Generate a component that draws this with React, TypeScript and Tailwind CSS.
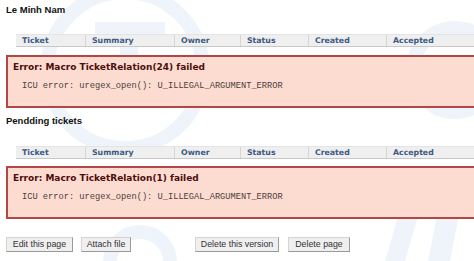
import React from "react";

const cols = [
  { label: "Ticket", w: "w-[69px]" },
  { label: "Summary", w: "w-[89px]" },
  { label: "Owner", w: "w-[66px]" },
  { label: "Status", w: "w-[68px]" },
  { label: "Created", w: "w-[78px]" },
  { label: "Accepted", w: "w-[100px]" },
];

function Header() {
  return (
    <div className="ml-[10px] flex h-[13px] border-t border-t-[#e4e4e4] border-b border-b-[#c8c8c8] bg-[#efefef]">
      {cols.map((c, i) => (
        <div
          key={c.label}
          className={`${c.w} shrink-0 pl-[6px] text-[7.8px] leading-[12px] font-bold text-[#3b5a82] ${i > 0 ? "border-l border-l-[#d6d6d6]" : ""}`}
          style={{ fontFamily: '"DejaVu Sans", Verdana, sans-serif' }}
        >
          {c.label}
        </div>
      ))}
    </div>
  );
}

function ErrorBox({ n }: { n: string }) {
  return (
    <div className="w-[480px] h-[53px] border-2 border-[#b44646] bg-[#fcdcd0] pl-[5px]">
      <div
        className="pt-[4px] text-[9px] leading-[12px] font-bold text-[#4e0c0c]"
        style={{ fontFamily: '"DejaVu Sans", Verdana, sans-serif' }}
      >
        Error: Macro TicketRelation({n}) failed
      </div>
      <div
        className="mt-[8px] pl-[9px] text-[8.7px] leading-[10px] text-[#4c3c3c]"
        style={{ fontFamily: '"Liberation Mono", "Courier New", monospace' }}
      >
        ICU error: uregex_open(): U_ILLEGAL_ARGUMENT_ERROR
      </div>
    </div>
  );
}

function Btn({ children, w }: { children: React.ReactNode; w: string }) {
  return (
    <div
      className={`${w} h-[15px] flex items-center justify-center border border-[#d4d4d4] border-r-[#9a9a9a] border-b-[#9a9a9a] bg-[#efefef] text-[8.8px] text-[#333]`}
      style={{ fontFamily: '"Liberation Sans", Arial, sans-serif' }}
    >
      {children}
    </div>
  );
}

export default function App() {
  return (
    <div className="relative w-[474px] h-[261px] overflow-hidden bg-white">
      <svg className="absolute inset-0" width="474" height="261" viewBox="0 0 474 261">
        <g fill="none" stroke="#eff4fa" strokeWidth="14">
          <circle cx="125" cy="70" r="78" />
          <circle cx="455" cy="70" r="42" />
          <circle cx="140" cy="262" r="30" />
        </g>
        <g fill="#eff4fa">
          <rect x="95" y="22" width="70" height="12" />
          <rect x="120" y="22" width="18" height="55" />
          <polygon points="400,210 420,210 405,261 385,261" />
          <polygon points="440,200 462,200 450,261 428,261" />
        </g>
      </svg>
      <div className="relative pl-[6px] pt-[4px]">
        <div
          className="h-[12px] text-[9.5px] leading-[12px] font-bold text-[#111]"
          style={{ fontFamily: '"Liberation Sans", Arial, sans-serif' }}
        >
          Le Minh Nam
        </div>
        <div className="mt-[18px]">
          <Header />
        </div>
        <div className="mt-[8px]">
          <ErrorBox n="24" />
        </div>
        <div
          className="mt-[7px] h-[12px] text-[9.5px] leading-[12px] font-bold text-[#111]"
          style={{ fontFamily: '"Liberation Sans", Arial, sans-serif' }}
        >
          Pendding tickets
        </div>
        <div className="mt-[19px]">
          <Header />
        </div>
        <div className="mt-[7px]">
          <ErrorBox n="1" />
        </div>
        <div className="mt-[18px] flex">
          <Btn w="w-[67px]">Edit this page</Btn>
          <div className="ml-[8px]">
            <Btn w="w-[50px]">Attach file</Btn>
          </div>
          <div className="ml-[64px]">
            <Btn w="w-[84px]">Delete this version</Btn>
          </div>
          <div className="ml-[9px]">
            <Btn w="w-[62px]">Delete page</Btn>
          </div>
        </div>
      </div>
    </div>
  );
}
